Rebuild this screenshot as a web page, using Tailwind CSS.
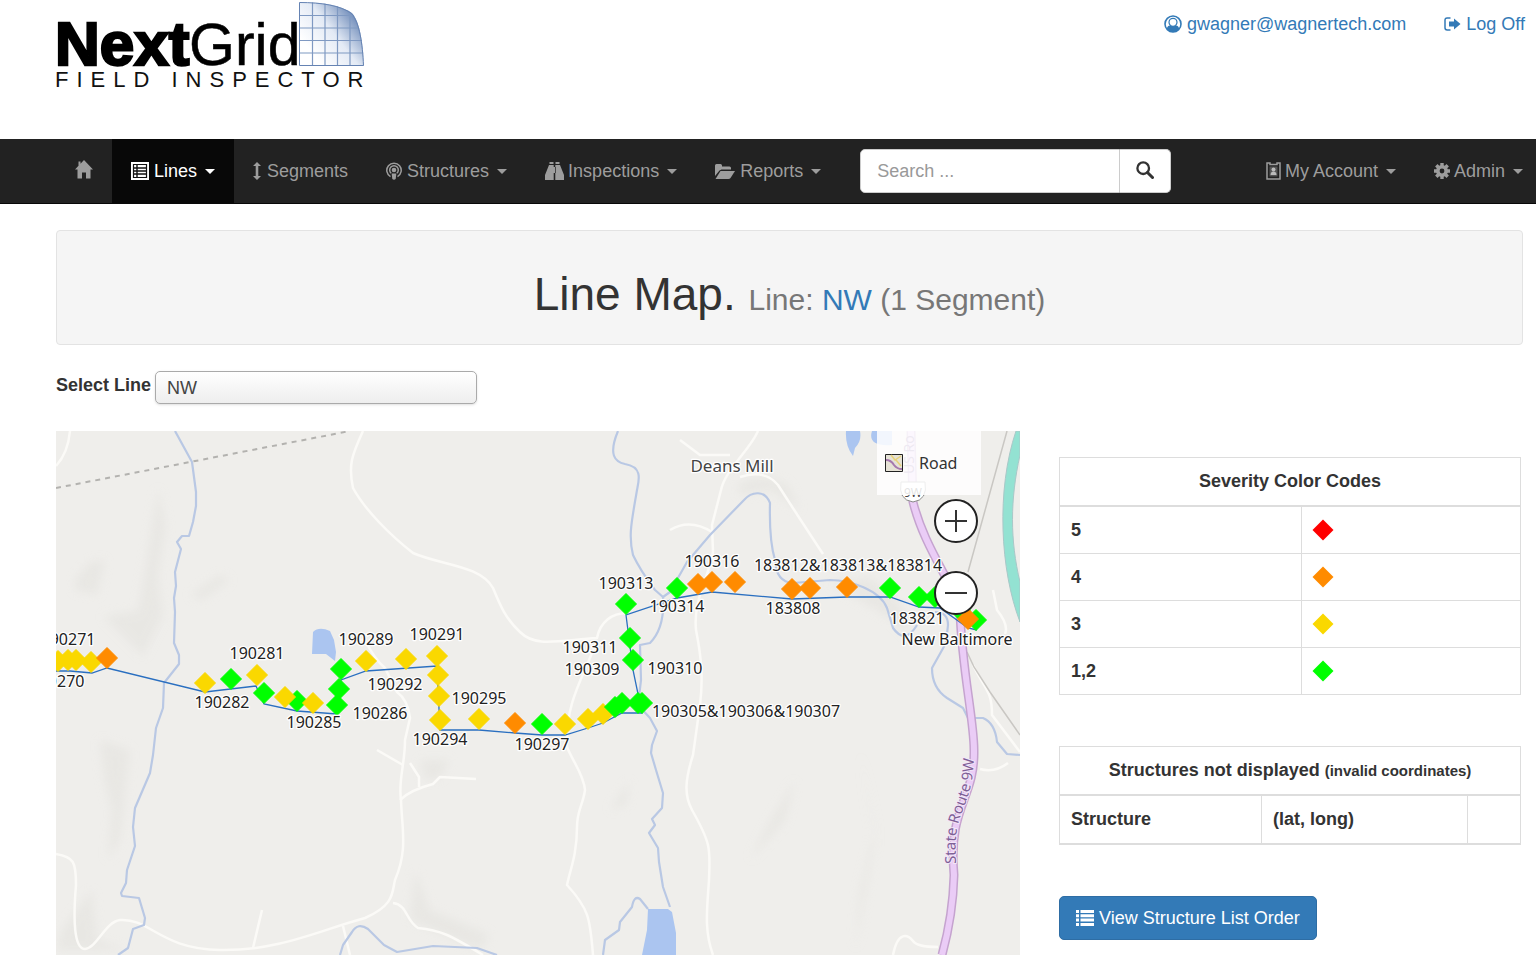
<!DOCTYPE html>
<html lang="en">
<head>
    <meta charset="UTF-8">
    <meta name="viewport" content="width=device-width, initial-scale=1.0">
    <title>Line Map - NextGrid Field Inspector</title>
    <script src="https://cdn.jsdelivr.net/npm/@tailwindcss/browser@4"></script>
</head>
<body class="bg-white text-[#333] font-['Liberation_Sans',Arial,sans-serif] text-lg leading-[26px]">

    <!-- Header -->
    <header class="flex justify-between items-start h-[139px] pl-[50px] pr-[11px]">
        <a href="#" aria-label="NextGrid Field Inspector">
            <svg class="block" width="330" height="96" viewBox="50 0 330 96">
                <defs>
                    <linearGradient id="logoGrid" x1="0.2" y1="0.8" x2="1" y2="0.2">
                        <stop offset="0" stop-color="#fff"/>
                        <stop offset="0.45" stop-color="#e3eaf5"/>
                        <stop offset="1" stop-color="#4d70a8"/>
                    </linearGradient>
                    <clipPath id="logoShape"><path d="M299 2c22 0 42 3 53 11 8 9 11 30 12 53h-65z"/></clipPath>
                </defs>
                <g clip-path="url(#logoShape)">
                    <rect x="299" y="2" width="66" height="64" fill="url(#logoGrid)"/>
                    <path d="M312.500 2v64M325 2v64M337.500 2v64M350 2v64M299 15.500h66M299 28h66M299 40.500h66M299 53h66" stroke="#7f99c2" stroke-width="1.200" fill="none"/>
                </g>
                <path d="M299.500 2.500c22 0 41 3 52 11 8 9 11 30 12 52h-64z" fill="none" stroke="#6583b3"/>
                <text x="55" y="65" font-size="62" font-weight="700" fill="#000" stroke="#000" stroke-width="2.500">Next</text>
                <text x="189" y="65" font-size="59" fill="#000" stroke="#000" stroke-width="0.500">Grid</text>
                <text class="tracking-[8px]" x="55" y="87" font-size="22" fill="#111">FIELD INSPECTOR</text>
            </svg>
        </a>
        <div class="flex gap-[38px] pt-[11px] text-[#337ab7]">
            <a href="#" class="flex items-center gap-[5px]">
                <svg width="18" height="18" viewBox="0 0 18 18"><circle cx="9" cy="9" r="8" fill="#fff" stroke="#337ab7" stroke-width="1.600"/><path d="M2.800 13.500c.6-2 1.600-3.100 3.100-3.100h6.200c1.500 0 2.500 1.100 3.100 3.100A8 8 0 0 1 9 17a8 8 0 0 1-6.200-3.500z" fill="#337ab7"/><circle cx="9" cy="7.300" r="4" fill="#fff" stroke="#337ab7" stroke-width="1.200"/></svg>
                gwagner@wagnertech.com
            </a>
            <a href="#" class="flex items-center gap-[5px]">
                <svg width="17" height="14" viewBox="0 0 17 14"><path d="M6.500 1H3.200Q1 1 1 3.200v7.600Q1 13 3.200 13h3.300" fill="none" stroke="#337ab7" stroke-width="1.500"/><path d="M10 1.500l6.500 5.500-6.500 5.500V9.500H5v-5h5z" fill="#337ab7"/></svg>
                Log Off
            </a>
        </div>
    </header>

    <!-- Navbar -->
    <nav class="flex h-[65px] bg-[#222] border-b border-[#080808] pl-14 pr-[13px] text-[#9d9d9d]">
        <a href="#" class="flex items-center px-[19px]" aria-label="Home">
            <svg width="18" height="22" viewBox="0 0 18 22" fill="currentColor"><path d="M9 0l9 9.500h-2.500V18.500h-4.500v-6h-4v6H2.500V9.500H0L3.500 5.700V1.500h2v2.200z"/></svg>
        </a>
        <a href="#" class="flex items-center px-[19px] bg-[#080808] text-white">
            <svg class="mr-[5px]" width="18" height="18" viewBox="0 0 18 18"><path d="M0 0h18v18H0z" fill="#fff"/><path d="M2.500 2.500h13v13h-13z" fill="none" stroke="#111" stroke-width="1.200"/><path d="M3 6h12M3 9h12M3 12h12M6 3v12" stroke="#111" stroke-width="1.400"/></svg>
            Lines
            <svg class="ml-2" width="10" height="5" viewBox="0 0 10 5" fill="currentColor"><path d="M0 0h10L5 5z"/></svg>
        </a>
        <a href="#" class="flex items-center px-[19px]">
            <svg class="mr-[6px]" width="8" height="18" viewBox="0 0 8 18" fill="currentColor"><path d="M4 0l4 4H5.300v10H8l-4 4-4-4h2.700V4H0z"/></svg>
            Segments
        </a>
        <a href="#" class="flex items-center px-[19px]">
            <svg class="mr-[5px]" width="16" height="18" viewBox="0 0 16 18"><path d="M4.500 14.700a7.200 7.200 0 1 1 7 0" fill="none" stroke="currentColor" stroke-width="1.500"/><path d="M5.200 11.300a4.300 4.300 0 1 1 5.600 0" fill="none" stroke="currentColor" stroke-width="1.500"/><circle cx="8" cy="8" r="2.300" fill="currentColor"/><path d="M5.600 11.500h4.800L9.700 17q-1.700 1.500-3.400 0z" fill="currentColor"/></svg>
            Structures
            <svg class="ml-2" width="10" height="5" viewBox="0 0 10 5" fill="currentColor"><path d="M0 0h10L5 5z"/></svg>
        </a>
        <a href="#" class="flex items-center px-[19px]">
            <svg class="mr-1" width="19" height="18" viewBox="0 0 19 18" fill="currentColor"><path d="M4.500 0h4v2h-4zM10.500 0h4v2h-4zM4 3h4.700v15H0v-5zM15 3h-4.700v15H19v-5zM8 5h3v6H8z"/></svg>
            Inspections
            <svg class="ml-2" width="10" height="5" viewBox="0 0 10 5" fill="currentColor"><path d="M0 0h10L5 5z"/></svg>
        </a>
        <a href="#" class="flex items-center px-[19px]">
            <svg class="mr-[5px]" width="20" height="15" viewBox="0 0 20 15" fill="currentColor"><path d="M0 12V1.500Q0 0 1.500 0h4Q7 0 7 1.500V2.500h7.500Q16 2.500 16 4v1.500H6.500L4.500 6.500z"/><path d="M5.500 7H20l-4.500 7q-.7 1-2 1H.5z"/></svg>
            Reports
            <svg class="ml-2" width="10" height="5" viewBox="0 0 10 5" fill="currentColor"><path d="M0 0h10L5 5z"/></svg>
        </a>
        <form class="flex self-start h-[44px] w-[311px] mt-[10px] ml-5" role="search">
            <input type="text" name="search" aria-label="Search" placeholder="Search ..." class="flex-1 min-w-0 bg-white border border-[#ccc] rounded-l-[5px] px-4 text-[#555] placeholder:text-[#999]">
            <button type="submit" aria-label="Submit search" class="flex items-center justify-center w-[51px] bg-white border border-l-0 border-[#ccc] rounded-r-[5px]">
                <svg width="18" height="20" viewBox="0 0 18 20" fill="none" stroke="#333"><circle cx="7.200" cy="7.200" r="5.800" stroke-width="2.300"/><path d="M11.500 11.500l5 5" stroke-width="3" stroke-linecap="round"/></svg>
            </button>
        </form>
        <div class="flex ml-auto">
            <a href="#" class="flex items-center px-[19px]">
                <svg class="mr-1" width="15" height="18" viewBox="0 0 15 18"><path d="M1 1h3v1.500h7V1h3v16H1z" fill="none" stroke="currentColor" stroke-width="1.500"/><path d="M3.500 4.500h8v10h-8z" fill="#555"/><circle cx="7.500" cy="7.500" r="2" fill="#bbb"/><path d="M4.500 13q0-3.500 3-3.500t3 3.500z" fill="#bbb"/></svg>
                My Account
                <svg class="ml-2" width="10" height="5" viewBox="0 0 10 5" fill="currentColor"><path d="M0 0h10L5 5z"/></svg>
            </a>
            <a href="#" class="flex items-center pl-[19px]">
                <svg class="mr-1" width="16" height="16" viewBox="0 0 16 16"><circle cx="8" cy="8" r="4.200" fill="none" stroke="currentColor" stroke-width="3.600"/><path d="M8 0v3M8 13v3M0 8h3M13 8h3M2.300 2.300l2.200 2.200M11.500 11.500l2.200 2.200M13.700 2.300l-2.200 2.200M4.500 11.500l-2.200 2.200" stroke="currentColor" stroke-width="3.400"/></svg>
                Admin
                <svg class="ml-2" width="10" height="5" viewBox="0 0 10 5" fill="currentColor"><path d="M0 0h10L5 5z"/></svg>
            </a>
        </div>
    </nav>

    <main class="pl-14 pr-[13px] pt-[26px]">
        <!-- Page title -->
        <div class="h-[115px] bg-[#f5f5f5] border border-[#e3e3e3] rounded-[4px] text-center pt-[37px]">
            <h1 class="text-[46px] leading-[52px]">Line Map. <small class="text-[30px] text-[#777]">Line: <a href="#" class="text-[#337ab7]">NW</a> (1 Segment)</small></h1>
        </div>

        <!-- Line picker -->
        <div class="flex items-start gap-1 mt-[26px]">
            <label for="line" class="font-bold leading-7">Select Line</label>
            <select id="line" name="line" class="appearance-none w-[322px] h-[33px] px-[11px] text-[#444] border border-[#aaa] rounded-[5px] bg-linear-to-b from-white to-[#eee] shadow-sm">
                <option>NW</option>
            </select>
        </div>

        <div class="flex items-start gap-[39px] mt-[27px] pr-[2px]">
            <!-- Map -->
            <section class="relative flex-1 min-w-0" aria-label="Line map">
                <svg class="block w-full bg-[#efeeeb]" viewBox="56 431 964 524" font-family="'Noto Sans', 'Open Sans', sans-serif">
                    <defs>
                        <path id="d" d="M0-10.500L10.500 0 0 10.500-10.500 0z" stroke-linejoin="round"/>
                        <path id="routeText" d="M956 864C955 838 956 828 962 812 970 793 974 778 974 750"/>
                        <filter id="soft" x="-50%" y="-50%" width="200%" height="200%"><feGaussianBlur stdDeviation="5"/></filter>
                    </defs>

                    <!-- hill shading -->
                    <g fill="#e4e3df" opacity="0.6" filter="url(#soft)">
                        <path d="M158 488l8 38-8 50 5 40-20 40-40-40 35-5 10-60z"/>
                        <path d="M75 580l15-18 15-2-8 35-22-5zM190 595l30-20 10 5-28 20z"/>
                        <path d="M100 740l30 10-10 90-12 20 4-50-8-30zM62 930l30-40 5 50 30 10H56z"/>
                        <path d="M738 485q20-15 50 0l12 25-30-20-30 5zM830 583l40-5 30 25 10 35-20-20z"/>
                        <path d="M415 870l15 40 60 25-10 15-70-30zM610 810l20-30-4 25zM765 830l30-50-10 40-35 40z"/>
                        <path d="M860 750l15 90-20 110 5-60 15-60zM420 760h30l-10 18-15 2z"/>
                    </g>

                    <!-- town boundary -->
                    <path d="M56 488L350 431" fill="none" stroke="#b3b2af" stroke-width="2" stroke-dasharray="5 5"/>

                    <!-- local roads -->
                    <g fill="none" stroke="#fbfaf7" stroke-width="2.500" stroke-linejoin="round">
                        <path d="M70 431q-2 22-14 35"/>
                        <path d="M363 431C352 455 348 465 353 488C365 510 390 535 413 553C440 565 480 565 493 588C500 605 505 618 520 632C535 647 555 641 597 638C600 622 612 613 627 613"/>
                        <path d="M597 640C585 675 565 700 567 747C572 760 584 775 585 790C583 805 577 810 577 827C577 855 570 870 567 885C590 910 590 920 593 955"/>
                        <path d="M758 431C750 450 725 470 721 490L712 525 713 552C708 580 693 600 696 630C702 660 703 680 700 705L693 755C685 780 684 795 692 810C712 845 710 850 709 880C707 910 704 930 713 955"/>
                        <path d="M740 477q25-8 38 8 18 28 45 69M670 530q20-12 42 2M680 440l20 15 30 0"/>
                        <path d="M56 854C74 857 76 862 76 885C73 920 74 949 85 949C97 948 105 922 120 920C150 918 160 949 220 950C280 951 320 930 365 918C395 905 392 892 395 880C408 850 402 830 401 800C398 780 405 765 405 740L410 718Q408 700 397 692L385 668Q375 660 365 640L350 640"/>
                        <path d="M400 800Q410 790 433 784L440 777 476 779M377 750L403 765M410 763l9 14v10M393 903C408 905 405 920 418 928C440 930 450 935 483 955M262 910l-9 38M343 926l7 29"/>
                        <path d="M993 590l4 20q12 15 8 24M973 665C985 690 992 690 992 715L1020 752M980 769q15 4 28-6M893 955c5-25 15-20 20-14q4 6 25 6"/>
                    </g>

                    <!-- streams -->
                    <g fill="none" stroke="#b9c8e4" stroke-width="2.200" stroke-linejoin="round">
                        <path d="M175 431L192 462 196 492 196 506 193 522 189 536 182 536 177 542 181 549 175 572 176 586 174 598 175 612 174 643 179 655 179 664 164 683 163 708 156 728 153 755 150 773 135 808 133 827 135 846 127 870 126 883 121 893 122 896 139 898 145 918 144 925 133 929 128 948 118 955"/>
                        <path d="M618 431C608 455 615 462 625 464C643 467 639 480 637 490C632 520 628 535 633 555Q640 570 655 590L663 597 670 592 687 562 710 535 744 500C752 491 765 490 770 503Q769 540 775 560 776 582 793 583L830 580C850 580 880 590 887 608L893 628Q905 645 917 625"/>
                        <path d="M663 597Q665 628 650 643L640 645 641 680 638 705 650 718 657 731 652 745 651 753 656 770 663 793 662 808 652 819 655 825 649 833 658 848 659 862 663 887 670 907"/>
                        <path d="M648 909L640 899Q634 895 632 907L620 922 619 930 605 940 603 955M340 955L343 945 352 932Q358 922 368 929L384 945 397 952 433 946 477 948 497 955"/>
                        <path d="M935 612q13 0 13 13l-2 18-14 25q0 20 15 30l16 10 5 10 15 0q12 5 14 24l10 12 13 1"/>
                    </g>

                    <!-- lakes -->
                    <g fill="#abc5f0">
                        <path d="M313 632q6-6 17-1l4 9 2 12-1 9-9-7-14 0z"/>
                        <path d="M846 431h14q2 10-5 17l-2 8q-8-10-7-25zM872 431h20v14q-25 2-20-14zM648 909h20l4 3 4 21v22h-34l5-25z"/>
                    </g>
                    <path d="M1016 431C996 490 1000 570 1020 622V582C1010 540 1010 500 1020 455V431z" fill="#93e2d2" stroke="#a9c8c8"/>

                    <!-- railway -->
                    <path d="M1007 431L968 572M967 652L974 667 990 692 1020 735" fill="none" stroke="#c9c7c3" stroke-width="1.500"/>

                    <!-- State Route 9W -->
                    <path d="M911 431L913 502C925 550 955 585 960 612C962 670 974 720 974 750C975 800 948 805 954 875Q953 915 942 955" fill="none" stroke="#c5a3cf" stroke-width="9"/>
                    <path d="M911 431L913 502C925 550 955 585 960 612C962 670 974 720 974 750C975 800 948 805 954 875Q953 915 942 955" fill="none" stroke="#eaccf6" stroke-width="6"/>
                    <text font-size="15" fill="#7e5f96" stroke="#f3e6f8" stroke-width="2" paint-order="stroke"><textPath href="#routeText">State Route 9W</textPath></text>
                    <text transform="translate(914 474) rotate(-90)" font-size="14" fill="#8a6aa2">US Ro</text>
                    <path d="M901 482h24q3 18-12 20-15-2-12-20z" fill="#fff" stroke="#888"/>
                    <text x="913" y="497" font-size="12" text-anchor="middle" fill="#444">9W</text>

                    <!-- transmission line -->
                    <path d="M56 671L70 671 92 673 107 668 205 692 256 686 264 704 297 711 337 714 341 680 366 671 437 666 440 730 479 730 515 733 542 735 565 735 588 728 603 723 622 713 642 713 633 670 626 615 677 598 712 592 792 599 847 597 890 597 919 607 940 608 968 628 977 630" fill="none" stroke="#2a6fc0" stroke-width="1.300"/>

                    <!-- structures, severity 3 -->
                    <g fill="#fad800" stroke="#fad800">
                        <use href="#d" x="58" y="661"/><use href="#d" x="68" y="660"/><use href="#d" x="76" y="660"/><use href="#d" x="91" y="662"/>
                        <use href="#d" x="205" y="683"/><use href="#d" x="257" y="675"/><use href="#d" x="366" y="661"/><use href="#d" x="406" y="659"/>
                        <use href="#d" x="437" y="656"/><use href="#d" x="438" y="675"/><use href="#d" x="439" y="696"/><use href="#d" x="440" y="720"/>
                        <use href="#d" x="479" y="719"/><use href="#d" x="565" y="724"/><use href="#d" x="588" y="719"/><use href="#d" x="603" y="714"/>
                    </g>
                    <!-- structures, severity 1 and 2 -->
                    <g fill="#0f0" stroke="#0f0">
                        <use href="#d" x="231" y="679"/><use href="#d" x="264" y="693"/><use href="#d" x="297" y="701"/>
                        <use href="#d" x="337" y="705"/><use href="#d" x="339" y="689"/><use href="#d" x="341" y="669"/><use href="#d" x="542" y="724"/>
                        <use href="#d" x="615" y="707"/><use href="#d" x="622" y="703"/><use href="#d" x="638" y="703"/><use href="#d" x="642" y="703"/>
                        <use href="#d" x="633" y="660"/><use href="#d" x="630" y="638"/><use href="#d" x="626" y="604"/><use href="#d" x="677" y="588"/>
                        <use href="#d" x="890" y="588"/><use href="#d" x="919" y="597"/><use href="#d" x="935" y="597"/><use href="#d" x="960" y="610"/><use href="#d" x="976" y="620"/>
                    </g>
                    <g fill="#fad800" stroke="#fad800">
                        <use href="#d" x="285" y="697"/><use href="#d" x="313" y="703"/>
                    </g>
                    <!-- structures, severity 4 -->
                    <g fill="#ff8b00" stroke="#ff8b00">
                        <use href="#d" x="107" y="658"/><use href="#d" x="515" y="723"/><use href="#d" x="698" y="584"/><use href="#d" x="712" y="582"/>
                        <use href="#d" x="735" y="582"/><use href="#d" x="792" y="589"/><use href="#d" x="810" y="588"/><use href="#d" x="847" y="587"/><use href="#d" x="968" y="619"/>
                    </g>

                    <!-- labels -->
                    <g font-size="16" text-anchor="middle" fill="#222" stroke="#fff" stroke-width="2.500" stroke-linejoin="round" paint-order="stroke">
                        <text x="68" y="645">190271</text>
                        <text x="57" y="687">190270</text>
                        <text x="257" y="659">190281</text>
                        <text x="222" y="708">190282</text>
                        <text x="314" y="728">190285</text>
                        <text x="380" y="719">190286</text>
                        <text x="366" y="645">190289</text>
                        <text x="437" y="640">190291</text>
                        <text x="395" y="690">190292</text>
                        <text x="440" y="745">190294</text>
                        <text x="479" y="704">190295</text>
                        <text x="542" y="750">190297</text>
                        <text x="746" y="717">190305&amp;190306&amp;190307</text>
                        <text x="592" y="675">190309</text>
                        <text x="675" y="674">190310</text>
                        <text x="590" y="653">190311</text>
                        <text x="626" y="589">190313</text>
                        <text x="677" y="612">190314</text>
                        <text x="712" y="567">190316</text>
                        <text x="793" y="614">183808</text>
                        <text x="848" y="571">183812&amp;183813&amp;183814</text>
                        <text x="917" y="624">183821</text>
                        <text x="957" y="645">New Baltimore</text>
                        <text x="732" y="472" font-size="17" fill="#444">Deans Mill</text>
                    </g>
                </svg>

                <button type="button" class="absolute top-0 right-[39px] flex items-center gap-4 w-[104px] h-16 pl-2 bg-white/85 text-base font-['Noto_Sans','Open_Sans',sans-serif] text-[#333]">
                    <svg width="18" height="18" viewBox="0 0 18 18"><path d="M.5.500h17v17H.5z" fill="#e6e2d6" stroke="#222"/><path d="M6 1l4 5 6-4M11 6l5 6" fill="none" stroke="#e8d27a" stroke-width="1.500"/><path d="M1 6q5 0 8 5 3 4 8 4" fill="none" stroke="#a578ae" stroke-width="2"/></svg>
                    Road
                </button>
                <div class="absolute top-[68px] right-[42px] flex flex-col gap-7">
                    <button type="button" aria-label="Zoom in" class="flex items-center justify-center size-11 rounded-full bg-white border-2 border-[#222]">
                        <svg width="24" height="24" viewBox="0 0 24 24" stroke="#333" stroke-width="2"><path d="M1 12h22M12 1v22"/></svg>
                    </button>
                    <button type="button" aria-label="Zoom out" class="flex items-center justify-center size-11 rounded-full bg-white border-2 border-[#222]">
                        <svg width="24" height="24" viewBox="0 0 24 24" stroke="#333" stroke-width="2"><path d="M1 12h22"/></svg>
                    </button>
                </div>
            </section>

            <!-- Sidebar -->
            <aside class="w-[462px] shrink-0 pt-[26px]">
                <table class="w-full table-fixed border-collapse border border-[#ddd] text-left">
                    <colgroup><col class="w-[242px]"><col></colgroup>
                    <thead>
                        <tr class="h-12 border-b-2 border-[#ddd]"><th colspan="2" class="text-center">Severity Color Codes</th></tr>
                    </thead>
                    <tbody>
                        <tr class="h-12 border-b border-[#ddd]">
                            <th scope="row" class="px-[11px] border-r border-[#ddd]">5</th>
                            <td class="px-[10px]"><svg class="block" width="22" height="22" viewBox="0 0 22 22" fill="#f00"><path d="M11 0.500L21.500 11 11 21.500 0.500 11z"/></svg></td>
                        </tr>
                        <tr class="h-[47px] border-b border-[#ddd]">
                            <th scope="row" class="px-[11px] border-r border-[#ddd]">4</th>
                            <td class="px-[10px]"><svg class="block" width="22" height="22" viewBox="0 0 22 22" fill="#ff8b00"><path d="M11 0.500L21.500 11 11 21.500 0.500 11z"/></svg></td>
                        </tr>
                        <tr class="h-[47px] border-b border-[#ddd]">
                            <th scope="row" class="px-[11px] border-r border-[#ddd]">3</th>
                            <td class="px-[10px]"><svg class="block" width="22" height="22" viewBox="0 0 22 22" fill="#fad800"><path d="M11 0.500L21.500 11 11 21.500 0.500 11z"/></svg></td>
                        </tr>
                        <tr class="h-[47px]">
                            <th scope="row" class="px-[11px] border-r border-[#ddd]">1,2</th>
                            <td class="px-[10px]"><svg class="block" width="22" height="22" viewBox="0 0 22 22" fill="#0f0"><path d="M11 0.500L21.500 11 11 21.500 0.500 11z"/></svg></td>
                        </tr>
                    </tbody>
                </table>

                <table class="w-full table-fixed border-collapse border border-[#ddd] text-left mt-[51px]">
                    <colgroup><col class="w-[202px]"><col class="w-[206px]"><col></colgroup>
                    <thead>
                        <tr class="h-12 border-b-2 border-[#ddd]"><th colspan="3" class="text-center">Structures not displayed <small class="text-[15px]">(invalid coordinates)</small></th></tr>
                        <tr class="h-[49px] border-b-2 border-[#ddd]">
                            <th class="px-[11px] border-r border-[#ddd]">Structure</th>
                            <th class="px-[11px] border-r border-[#ddd]">(lat, long)</th>
                            <th></th>
                        </tr>
                    </thead>
                </table>

                <button type="button" class="flex items-center gap-[5px] h-11 px-4 mt-[51px] bg-[#337ab7] border border-[#2e6da4] rounded-[5px] text-white">
                    <svg width="18" height="16" viewBox="0 0 18 16" fill="currentColor"><path d="M0 0h3v3H0zM4.500 0H18v3H4.500zM0 4.300h3v3H0zM4.500 4.300H18v3H4.500zM0 8.600h3v3H0zM4.500 8.600H18v3H4.500zM0 13h3v3H0zM4.500 13H18v3H4.500z"/></svg>
                    View Structure List Order
                </button>
            </aside>
        </div>
    </main>
</body>
</html>
